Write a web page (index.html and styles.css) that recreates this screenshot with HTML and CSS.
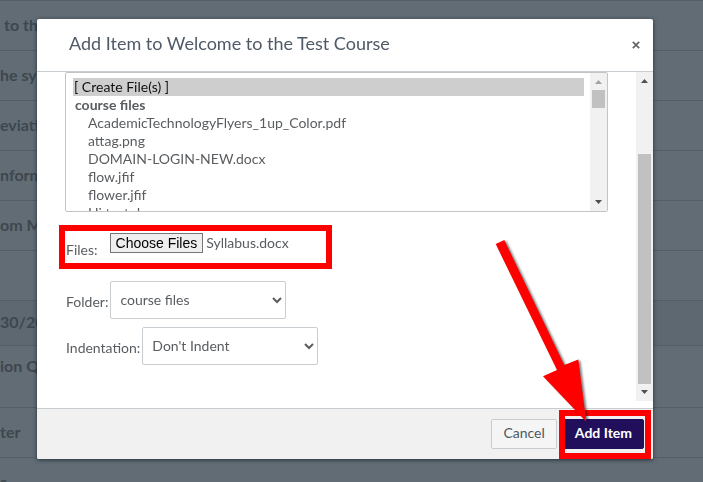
FILE: index.html
```html
<!DOCTYPE html>
<html lang="en">
<head>
    <meta charset="UTF-8">
    <meta name="viewport" content="width=device-width, initial-scale=1.0">
    <title>Add Item to Welcome to the Test Course</title>
    <link rel="stylesheet" href="styles.css">
</head>
<body>

<ul class="module-list">
    <li class="first">to the</li>
    <li>he syl</li>
    <li>eviati</li>
    <li>nform</li>
    <li>om Me</li>
    <li></li>
    <li class="module-header">30/20</li>
    <li class="tall">ion Q</li>
    <li>ter</li>
    <li class="last">s</li>
</ul>

<div class="overlay">
    <div class="modal" role="dialog" aria-labelledby="modal-title">
        <header class="modal-header">
            <h1 id="modal-title">Add Item to Welcome to the Test Course</h1>
            <button class="close" type="button" aria-label="Close">
                <svg width="8" height="8" viewBox="0 0 8 8"><path d="M0.8 0.8L7.2 7.2M7.2 0.8L0.8 7.2" stroke="#666" stroke-width="1.7"/></svg>
            </button>
        </header>

        <div class="modal-body">
            <form class="item-form">
                <div class="listbox">
                    <select size="8" aria-label="Select a file">
                        <option selected>[ Create File(s) ]</option>
                        <optgroup label="course files">
                            <option>AcademicTechnologyFlyers_1up_Color.pdf</option>
                            <option>attag.png</option>
                            <option>DOMAIN-LOGIN-NEW.docx</option>
                            <option>flow.jfif</option>
                            <option>flower.jfif</option>
                            <option>Hi test.docx</option>
                        </optgroup>
                    </select>
                    <div class="scrollbar list-scroll">
                        <svg width="7" height="4" viewBox="0 0 7 4"><path d="M0 4L3.5 0L7 4Z" fill="#a3a3a3"/></svg>
                        <div class="track"><div class="thumb"></div></div>
                        <svg width="7" height="4" viewBox="0 0 7 4"><path d="M0 0L3.5 4L7 0Z" fill="#505050"/></svg>
                    </div>
                </div>

                <div class="form-row file-row">
                    <label for="files">Files:</label>
                    <input type="file" id="files" multiple>
                    <span class="highlight"></span>
                </div>
                <div class="form-row">
                    <label for="folder">Folder:</label>
                    <select id="folder"><option>course files</option></select>
                </div>
                <div class="form-row">
                    <label for="indent">Indentation:</label>
                    <select id="indent"><option>Don't Indent</option></select>
                </div>
            </form>
            <div class="scrollbar body-scroll">
                <svg width="7" height="4" viewBox="0 0 7 4"><path d="M0 4L3.5 0L7 4Z" fill="#505050"/></svg>
                <div class="track"><div class="thumb"></div></div>
                <svg width="7" height="4" viewBox="0 0 7 4"><path d="M0 0L3.5 4L7 0Z" fill="#505050"/></svg>
            </div>
        </div>

        <footer class="modal-footer">
            <button class="btn" type="button">Cancel</button>
            <button class="btn btn-primary" type="button">Add Item</button>
            <span class="highlight"></span>
            <svg class="arrow" width="110" height="200" viewBox="490 235 110 200">
                <path d="M495.7 244L504.3 240L564.3 365L578.3 359.5L586.3 421.7L543 376.3L557 370Z" fill="#f00"/>
            </svg>
        </footer>
    </div>
</div>

<script>
    // preselect the syllabus in the file picker
    const picked = new DataTransfer();
    picked.items.add(new File([""], "Syllabus.docx"));
    document.getElementById("files").files = picked.files;
</script>
</body>
</html>
```
FILE: styles.css
```css
:root {
    --text: #5a5d60;
    --border: #c7cdd1;
    --brand: #220f5c;
    --mark: #ff0000;
}
* {
    box-sizing: border-box;
}
body {
    margin: 0;
    background-color: #626c74;
    color: var(--text);
    font-family: Lato, "Liberation Sans", sans-serif;
    font-size: 14px;
}

/* course modules behind the dialog */
.module-list {
    height: 100vh;
    margin: 0;
    padding: 0;
    overflow: hidden;
    list-style: none;
    color: #3d474f;
    font-size: 16px;
    font-weight: bold;
}
.module-list li {
    height: 50px;
    line-height: 48px;
    border-top: 1px solid #535e67;
}
.module-list .first {
    padding-left: 4px;
}
.module-list .module-header {
    height: 45px;
    line-height: 42px;
    background-color: #5e6870;
}
.module-list .tall {
    height: 62px;
    line-height: 40px;
}
.module-list .last {
    height: 25px;
}

.overlay {
    position: fixed;
    inset: 0;
    padding: 19px 50px 23px 37px;
}
.modal {
    display: flex;
    flex-direction: column;
    height: 100%;
    background-color: #fff;
    border-radius: 2px;
    box-shadow: 0 1px 4px rgba(20, 35, 45, 0.8);
}
.modal-header {
    display: flex;
    justify-content: space-between;
    align-items: center;
    height: 53px;
    padding: 0 13px 5px 32px;
    border-bottom: 1px solid var(--border);
}
.modal-header h1 {
    margin: 0;
    color: #4f5a66;
    font-size: 18px;
    font-weight: normal;
}
.close {
    display: flex;
    padding: 4px 0 0;
    border: none;
    background: none;
}
.modal-body {
    display: flex;
    flex: 1;
    justify-content: space-between;
    padding-bottom: 7px;
}
.item-form {
    flex: 1;
    padding: 0 28px;
}

.listbox {
    display: flex;
    height: 140px;
    margin-bottom: 21px;
    border: 1px solid #c4c4c4;
    border-radius: 2px;
}
.listbox select {
    flex: 1;
    height: 138px;
    margin: 0;
    padding: 5px 6px 0 7px;
    border: none;
    background: #fff;
    color: var(--text);
    font: inherit;
    overflow: hidden;
}
.listbox select::-webkit-scrollbar {
    display: none;
}
.listbox option,
.listbox optgroup {
    padding: 0 0 1px;
}
.listbox option {
    padding-left: 1px;
}
.listbox optgroup option {
    padding-left: 15px;
}

.scrollbar {
    display: flex;
    flex-direction: column;
    align-items: center;
    width: 17px;
    padding: 7px 0;
    background-color: #f1f1f1;
}
.track {
    flex: 1;
    width: 13px;
    margin: 6px 0;
}
.thumb {
    height: 18px;
    background-color: #c1c1c1;
}
.body-scroll .track {
    display: flex;
    align-items: flex-end;
}
.body-scroll .thumb {
    width: 13px;
    height: 78%;
}

.form-row {
    display: flex;
    align-items: flex-start;
    gap: 2px;
    margin-bottom: 8px;
    padding-left: 1px;
}
.form-row label {
    padding-top: 12px;
}
.form-row select {
    width: 176px;
    height: 38px;
    padding: 0 5px 2px;
    border: 1px solid var(--border);
    border-radius: 2px;
    background-color: #fff;
    color: var(--text);
    font: inherit;
}
.file-row {
    position: relative;
    gap: 12px;
    height: 40px;
}
.file-row label {
    padding-top: 8px;
}
.file-row input {
    width: 200px;
    color: var(--text);
    font: inherit;
}
.file-row input::file-selector-button {
    height: 20px;
    margin-right: 3px;
    padding: 0 5px;
    border: 1px solid #767676;
    background-color: #efefef;
    color: #000;
    font: 14px "Liberation Sans", Arial, sans-serif;
}

.modal-footer {
    position: relative;
    display: flex;
    justify-content: flex-end;
    gap: 6px;
    height: 51px;
    padding: 10px 9px;
    border-top: 1px solid var(--border);
    border-radius: 0 0 2px 2px;
    background-color: #f1f1f1;
}
.btn {
    height: 30px;
    padding: 0 11px 3px;
    border: 1px solid var(--border);
    border-radius: 2px;
    background-color: #f5f5f5;
    color: #4c5860;
    font: inherit;
}
.btn-primary {
    border-color: var(--brand);
    background-color: var(--brand);
    color: #fff;
    font-weight: bold;
}

/* red call-outs */
.highlight {
    position: absolute;
    border: 6px solid var(--mark);
}
.file-row .highlight {
    top: -8px;
    left: -6px;
    width: 273px;
    height: 44px;
}
.modal-footer .highlight {
    right: 2px;
    bottom: 0;
    width: 92px;
    height: 49px;
}
.arrow {
    position: absolute;
    right: 53px;
    bottom: 24px;
    filter: drop-shadow(2px 1px 1px rgba(0, 0, 0, 0.5));
}
```
